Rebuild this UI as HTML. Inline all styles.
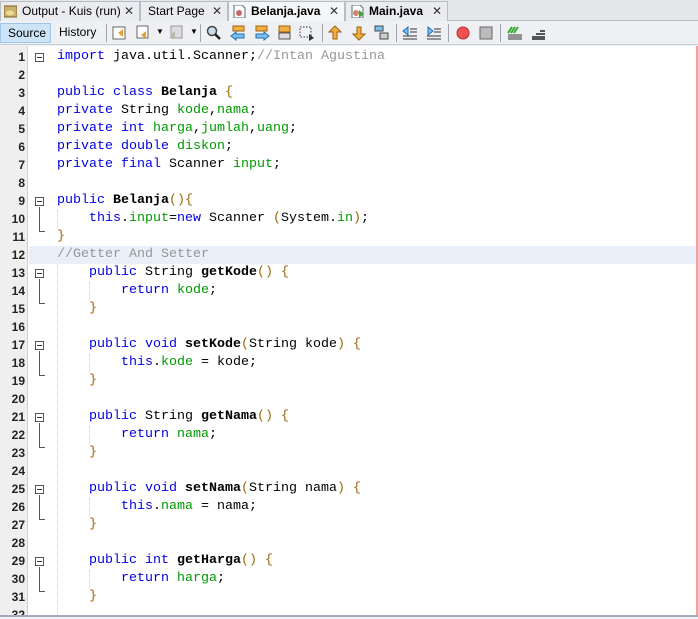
<!DOCTYPE html>
<html><head><style>
*{margin:0;padding:0;box-sizing:border-box}
body{width:698px;height:619px;overflow:hidden;background:#eef0f4;font-family:"Liberation Sans",sans-serif;position:relative}
.tabs{position:absolute;left:0;top:0;width:698px;height:21px;background:#e4e6ea;border-bottom:1px solid #b8bcc4}
.tab{position:absolute;top:1px;height:20px;border:1px solid #b8bcc4;border-bottom:none;background:#ebecef;font-size:12px;line-height:18px;color:#000}
.tab.act{background:#f5f6f8}
.tab .x{position:absolute;right:5px;top:0;font-size:12px;color:#333}
.ic{position:absolute;top:3px;width:13px;height:13px}
.tb{position:absolute;left:0;top:21px;width:698px;height:24px;background:#eef0f4;border-bottom:1px solid #c8ccd4}
.btn{position:absolute;top:2px;height:20px;font-size:12px;line-height:18px;padding:0 7px}
.src{left:0;width:51px;background:#cde4f7;border:1px solid #9dc6ea}
.sep{position:absolute;top:3px;width:1px;height:18px;background:#a0a4ac}
.ti{position:absolute;top:4px;width:16px;height:16px}
.ed{position:absolute;left:0;top:46px;width:698px;height:571px;background:#fff;border-bottom:2px solid #a8a8b8;overflow:hidden}
.gut{position:absolute;left:0;top:0;width:28px;height:571px;background:#efefef;border-right:1px solid #d0d0d0}
.ln{position:absolute;right:3px;font:bold 12px "Liberation Sans",sans-serif;line-height:18px;color:#222;text-align:right;width:25px}
.code{position:absolute;left:57px;top:2px;font:13.33px "Liberation Mono",monospace;color:#000}
.l{height:18px;line-height:18px;white-space:pre}
.k{color:#0000e6}.f{color:#009900}.c{color:#969696}.o{color:#996600}
.fold{position:absolute;left:35px;width:9px;height:9px;border:1px solid #555;background:#fff}
.fold:after{content:"";position:absolute;left:1px;top:3px;width:5px;height:1px;background:#333}
.fl{position:absolute;left:39px;width:1px;background:#555}
.fe{position:absolute;left:39px;width:6px;height:1px;background:#555}
.hl{position:absolute;left:29px;top:200px;width:667px;height:18px;background:#e9eff8}
.red{position:absolute;left:696px;top:0;width:2px;height:571px;background:#f4a0a0}
.g{position:absolute;width:1px;border-left:1px dotted #ccc}
</style></head><body>
<div class="tabs">
 <div class="tab" style="left:0;width:140px"><svg class="ic" style="left:3px" viewBox="0 0 13 13"><rect x="0" y="1" width="13" height="11" fill="#c8b070" stroke="#806020"/><ellipse cx="6" cy="8" rx="4" ry="2.5" fill="#f0d890"/></svg><span style="position:absolute;left:21px">Output - Kuis (run)</span><span class="x">✕</span></div>
 <div class="tab" style="left:140px;width:88px"><span style="position:absolute;left:7px">Start Page</span><span class="x">✕</span></div>
 <div class="tab act" style="left:228px;width:117px"><svg class="ic" style="left:4px" viewBox="0 0 13 13"><path d="M1 0h8l3 3v10H1z" fill="#fff" stroke="#667"/><circle cx="6" cy="8" r="3" fill="#c66"/></svg><b style="position:absolute;left:22px">Belanja.java</b><span class="x">✕</span></div>
 <div class="tab" style="left:345px;width:103px"><svg class="ic" style="left:5px" viewBox="0 0 13 13"><path d="M1 0h8l3 3v10H1z" fill="#fff" stroke="#667"/><circle cx="5" cy="8" r="3" fill="#c86"/><path d="M8 5l5 4-5 4z" fill="#3a3"/></svg><b style="position:absolute;left:23px">Main.java</b><span class="x">✕</span></div>
</div>
<div class="tb">
 <div class="btn src">Source</div>
 <div class="btn" style="left:52px">History</div>
 <div class="sep" style="left:106px"></div>
 <svg class="ti" style="left:112px" viewBox="0 0 16 16"><rect x="1" y="2" width="12" height="12" fill="#fff" stroke="#666"/><path d="M6 8l5-4v8z" fill="#e8a030"/></svg>
 <svg class="ti" style="left:136px" viewBox="0 0 16 16"><rect x="1" y="1" width="11" height="12" fill="#fff" stroke="#666"/><path d="M5 10l5-4v8z" fill="#e8a030"/></svg>
 <span style="position:absolute;left:156px;top:6px;font-size:8px">▼</span>
 <svg class="ti" style="left:168px" viewBox="0 0 16 16"><rect x="3" y="1" width="11" height="12" fill="#ddd" stroke="#999"/><path d="M2 10l5-4v8z" fill="#bba"/></svg>
 <span style="position:absolute;left:190px;top:6px;font-size:8px">▼</span>
 <div class="sep" style="left:200px"></div>
 <svg class="ti" style="left:206px" viewBox="0 0 16 16"><circle cx="6" cy="6" r="4.5" fill="#cde" stroke="#444" stroke-width="1.5"/><path d="M9 9l5 5" stroke="#222" stroke-width="2.5"/></svg>
 <svg class="ti" style="left:230px" viewBox="0 0 16 16"><rect x="3" y="1" width="11" height="5" fill="#f0b040" stroke="#a06010"/><path d="M1 11l5-4v2h8v4H6v2z" fill="#7cc0f0" stroke="#2070b0"/></svg>
 <svg class="ti" style="left:254px" viewBox="0 0 16 16"><rect x="2" y="1" width="11" height="5" fill="#f0b040" stroke="#a06010"/><path d="M15 11l-5-4v2H2v4h8v2z" fill="#7cc0f0" stroke="#2070b0"/></svg>
 <svg class="ti" style="left:277px" viewBox="0 0 16 16"><rect x="2" y="1" width="11" height="6" fill="#f0b040" stroke="#a06010"/><rect x="2" y="8" width="11" height="6" fill="#ddd" stroke="#555"/></svg>
 <svg class="ti" style="left:299px" viewBox="0 0 16 16"><rect x="1" y="2" width="11" height="10" fill="none" stroke="#333" stroke-dasharray="1.5 1.5"/><path d="M10 9l5 4-5 3z" fill="#333"/></svg>
 <div class="sep" style="left:322px"></div>
 <svg class="ti" style="left:328px" viewBox="0 0 16 16"><path d="M7 1l6 6H9v7H5V7H1z" fill="#f0b040" stroke="#a06010"/></svg>
 <svg class="ti" style="left:352px" viewBox="0 0 16 16"><path d="M7 15l6-6H9V2H5v7H1z" fill="#f0b040" stroke="#a06010"/></svg>
 <svg class="ti" style="left:374px" viewBox="0 0 16 16"><rect x="1" y="1" width="8" height="5" fill="#7cc0f0" stroke="#444"/><rect x="6" y="8" width="8" height="6" fill="#ccc" stroke="#444"/></svg>
 <div class="sep" style="left:396px"></div>
 <svg class="ti" style="left:402px" viewBox="0 0 16 16"><path d="M1 6l5-4v8z" fill="#7cc0f0" stroke="#2070b0"/><path d="M8 4h7M8 7h7M1 11h14M1 14h14" stroke="#333"/></svg>
 <svg class="ti" style="left:426px" viewBox="0 0 16 16"><path d="M7 6L2 2v8z" fill="#7cc0f0" stroke="#2070b0"/><path d="M8 4h7M8 7h7M1 11h14M1 14h14" stroke="#333"/></svg>
 <div class="sep" style="left:448px"></div>
 <svg class="ti" style="left:455px" viewBox="0 0 16 16"><circle cx="8" cy="8" r="6" fill="#f05050" stroke="#b03030"/></svg>
 <svg class="ti" style="left:478px" viewBox="0 0 16 16"><rect x="2" y="2" width="12" height="12" fill="#bbb" stroke="#666"/></svg>
 <div class="sep" style="left:500px"></div>
 <svg class="ti" style="left:507px" viewBox="0 0 16 16"><path d="M1 8l4-6M4 8l4-6M7 8l4-6" stroke="#3a3" stroke-width="2"/><path d="M1 10h14M1 12h14M1 14h14" stroke="#333"/></svg>
 <svg class="ti" style="left:530px" viewBox="0 0 16 16"><path d="M10 6h5M6 9h9M2 12h13M2 14h13" stroke="#222" stroke-width="1.5"/></svg>
</div>
<div class="ed">
 <div class="gut"></div>
 <div class="hl"></div>
 <div class="red"></div>
 <div class="g" style="left:57px;top:218px;height:353px"></div>
 <div class="g" style="left:89px;top:236px;height:18px"></div>
 <div class="g" style="left:89px;top:308px;height:18px"></div>
 <div class="g" style="left:89px;top:380px;height:18px"></div>
 <div class="g" style="left:89px;top:452px;height:18px"></div>
 <div class="g" style="left:89px;top:524px;height:18px"></div>
 <div class="g" style="left:57px;top:164px;height:18px"></div>
 <div class="fold" style="top:7px"></div>
 <div class="fold" style="top:151px"></div><div class="fl" style="top:161px;height:24px"></div><div class="fe" style="top:185px"></div>
 <div class="fold" style="top:223px"></div><div class="fl" style="top:233px;height:24px"></div><div class="fe" style="top:257px"></div>
 <div class="fold" style="top:295px"></div><div class="fl" style="top:305px;height:24px"></div><div class="fe" style="top:329px"></div>
 <div class="fold" style="top:367px"></div><div class="fl" style="top:377px;height:24px"></div><div class="fe" style="top:401px"></div>
 <div class="fold" style="top:439px"></div><div class="fl" style="top:449px;height:24px"></div><div class="fe" style="top:473px"></div>
 <div class="fold" style="top:511px"></div><div class="fl" style="top:521px;height:24px"></div><div class="fe" style="top:545px"></div>
 <div style="position:absolute;left:0;top:0;width:28px">
  <div class="ln" style="top:2px">1</div><div class="ln" style="top:20px">2</div><div class="ln" style="top:38px">3</div><div class="ln" style="top:56px">4</div><div class="ln" style="top:74px">5</div><div class="ln" style="top:92px">6</div><div class="ln" style="top:110px">7</div><div class="ln" style="top:128px">8</div><div class="ln" style="top:146px">9</div><div class="ln" style="top:164px">10</div><div class="ln" style="top:182px">11</div><div class="ln" style="top:200px">12</div><div class="ln" style="top:218px">13</div><div class="ln" style="top:236px">14</div><div class="ln" style="top:254px">15</div><div class="ln" style="top:272px">16</div><div class="ln" style="top:290px">17</div><div class="ln" style="top:308px">18</div><div class="ln" style="top:326px">19</div><div class="ln" style="top:344px">20</div><div class="ln" style="top:362px">21</div><div class="ln" style="top:380px">22</div><div class="ln" style="top:398px">23</div><div class="ln" style="top:416px">24</div><div class="ln" style="top:434px">25</div><div class="ln" style="top:452px">26</div><div class="ln" style="top:470px">27</div><div class="ln" style="top:488px">28</div><div class="ln" style="top:506px">29</div><div class="ln" style="top:524px">30</div><div class="ln" style="top:542px">31</div><div class="ln" style="top:560px">32</div>
 </div>
 <div class="code"><div class="l"><span class="k">import</span> java.util.Scanner;<span class="c">//Intan Agustina</span></div><div class="l"> </div><div class="l"><span class="k">public class</span> <b>Belanja</b> <span class="o">{</span></div><div class="l"><span class="k">private</span> String <span class="f">kode</span>,<span class="f">nama</span>;</div><div class="l"><span class="k">private int</span> <span class="f">harga</span>,<span class="f">jumlah</span>,<span class="f">uang</span>;</div><div class="l"><span class="k">private double</span> <span class="f">diskon</span>;</div><div class="l"><span class="k">private final</span> Scanner <span class="f">input</span>;</div><div class="l"> </div><div class="l"><span class="k">public</span> <b>Belanja</b><span class="o">(){</span></div><div class="l">    <span class="k">this</span>.<span class="f">input</span>=<span class="k">new</span> Scanner <span class="o">(</span>System.<span class="f">in</span><span class="o">)</span>;</div><div class="l"><span class="o">}</span></div><div class="l"><span class="c">//Getter And Setter</span></div><div class="l">    <span class="k">public</span> String <b>getKode</b><span class="o">()</span> <span class="o">{</span></div><div class="l">        <span class="k">return</span> <span class="f">kode</span>;</div><div class="l">    <span class="o">}</span></div><div class="l"> </div><div class="l">    <span class="k">public void</span> <b>setKode</b><span class="o">(</span>String kode<span class="o">)</span> <span class="o">{</span></div><div class="l">        <span class="k">this</span>.<span class="f">kode</span> = kode;</div><div class="l">    <span class="o">}</span></div><div class="l"> </div><div class="l">    <span class="k">public</span> String <b>getNama</b><span class="o">()</span> <span class="o">{</span></div><div class="l">        <span class="k">return</span> <span class="f">nama</span>;</div><div class="l">    <span class="o">}</span></div><div class="l"> </div><div class="l">    <span class="k">public void</span> <b>setNama</b><span class="o">(</span>String nama<span class="o">)</span> <span class="o">{</span></div><div class="l">        <span class="k">this</span>.<span class="f">nama</span> = nama;</div><div class="l">    <span class="o">}</span></div><div class="l"> </div><div class="l">    <span class="k">public int</span> <b>getHarga</b><span class="o">()</span> <span class="o">{</span></div><div class="l">        <span class="k">return</span> <span class="f">harga</span>;</div><div class="l">    <span class="o">}</span></div></div>
</div>
</body></html>
